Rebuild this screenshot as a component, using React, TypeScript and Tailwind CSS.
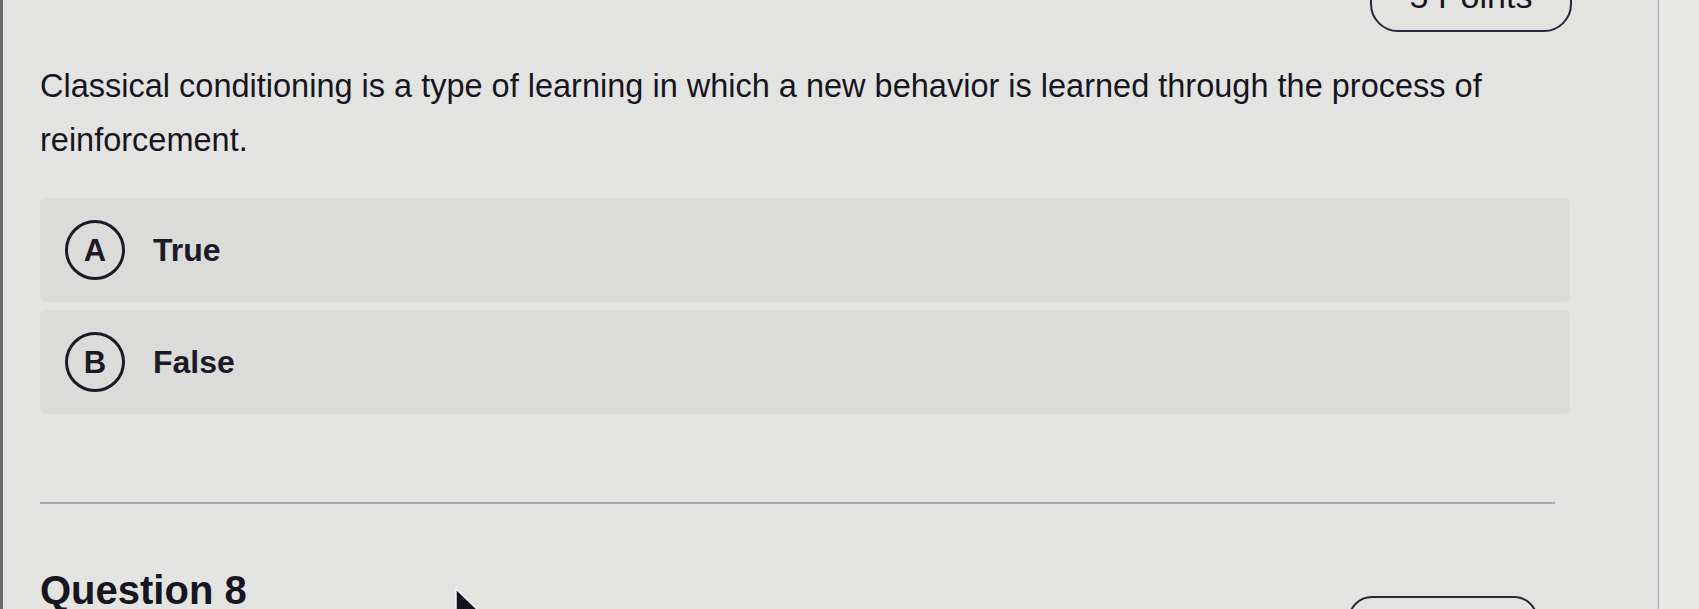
import React from 'react';

// One true/false question card from a quiz page, with the next question's header below.

const OPTIONS = [
  { key: 'A', label: 'True' },
  { key: 'B', label: 'False' },
];

function OptionRow({ letter, label }: { letter: string; label: string }) {
  return (
    <div className="flex h-[104px] items-center rounded-md bg-[#dbdcda] pl-[25px]">
      <span className="flex h-[60px] w-[60px] shrink-0 items-center justify-center rounded-full border-[3px] border-[#1c1a27] text-[31px] font-bold leading-none text-[#1c1a27]">
        {letter}
      </span>
      <span className="ml-[28px] text-[32px] font-bold leading-none text-[#1c1a27]">{label}</span>
    </div>
  );
}

function Cursor() {
  return (
    <svg
      className="absolute left-[449px] top-[587px]"
      width="28"
      height="40"
      viewBox="0 0 28 40"
    >
      <path d="M4 2 L4 34 L12 26 L18 38 L23 36 L17 24 L27 24 Z" fill="#14121c" stroke="#f2f2f2" strokeWidth="1.5" />
    </svg>
  );
}

export default function App() {
  return (
    <div
      className="relative flex h-[609px] w-[1699px] overflow-hidden border-l-[3px] border-[#6b6b6e] bg-[#e3e4e1] text-[#17151f]"
      style={{ fontFamily: '"Liberation Sans", Arial, sans-serif' }}
    >
      <main className="w-[1655px] shrink-0 pl-[37px] pr-[88px]">
        {/* points badge, mostly scrolled out of view */}
        <div className="flex h-[32px] justify-end">
          <div className="-mr-[2px] -mt-[28px] flex h-[60px] w-[202px] items-center justify-center rounded-[28px] border-2 border-[#2a2838] pb-3 text-[34px] leading-none">
            5 Points
          </div>
        </div>

        <p className="mt-[27px] text-[32.5px] leading-[54px]">
          Classical conditioning is a type of learning in which a new behavior is learned through the process of
          reinforcement.
        </p>

        <div className="mt-[31px] flex flex-col gap-[8px]">
          {OPTIONS.map((o) => (
            <OptionRow key={o.key} letter={o.key} label={o.label} />
          ))}
        </div>

        <div className="mr-[15px] mt-[88px] h-[2px] bg-[#aaa9ad]" />

        <div className="mt-[66px] flex items-start justify-between">
          <h2 className="text-[40px] font-bold leading-none">Question 8</h2>
          <div className="mr-[32px] mt-[26px] h-[60px] w-[190px] rounded-[24px] border-2 border-[#2a2838]" />
        </div>
      </main>

      <div className="w-px bg-[#a6a7af]" />
      <aside className="flex-1 bg-[#e7e8e5]" />

      <Cursor />
    </div>
  );
}
